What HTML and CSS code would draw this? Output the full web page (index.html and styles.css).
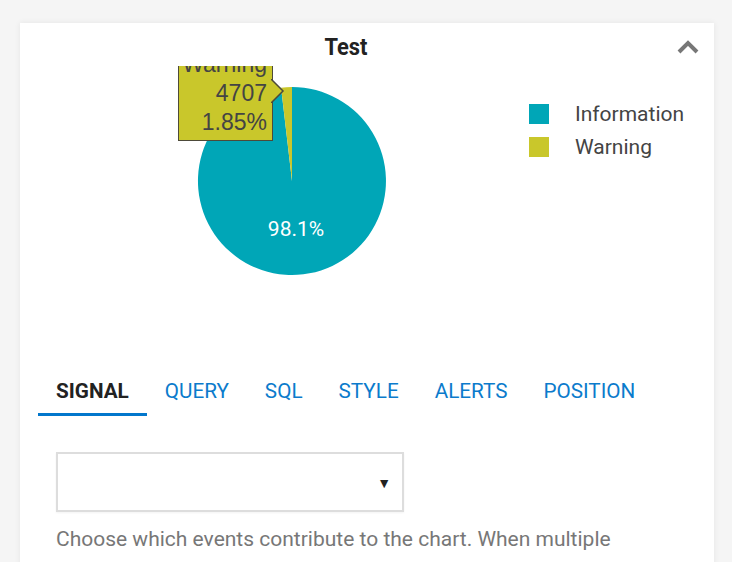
FILE: index.html
```html
<!DOCTYPE html>
<html>
<head>
<meta charset="utf-8">
<link rel="stylesheet" href="styles.css">
</head>
<body>
<div class="card">
  <div class="card-header">
    <h1 class="title">Test</h1>
    <svg class="chevron" width="22" height="14" viewBox="0 0 22 14"><polyline points="2,12 11,3 20,12" fill="none" stroke="#777" stroke-width="4"/></svg>
  </div>
  <div class="chart">
    <svg class="pie" width="500" height="280" viewBox="0 0 500 280">
      <path d="M272,115 L272,21 A94,94 0 1,1 261.1,21.63 Z" fill="#00a6b7"/>
      <path d="M272,115 L261.1,21.63 A94,94 0 0,1 272,21 Z" fill="#c9c72b"/>
      <text x="276" y="170" class="pie-label" text-anchor="middle">98.1%</text>
    </svg>
    <div class="tooltip">
      <div>Warning</div>
      <div>4707</div>
      <div>1.85%</div>
      <svg class="tip-arrow" width="14" height="24" viewBox="0 0 14 24"><polygon points="0,0 12,12 0,24" fill="#c9c72b"/><polyline points="0,0 12,12 0,24" fill="none" stroke="#4d4a3a" stroke-width="1.5"/></svg>
    </div>
    <ul class="legend">
      <li><span class="swatch info"></span>Information</li>
      <li><span class="swatch warn"></span>Warning</li>
    </ul>
  </div>
  <nav class="tabs">
    <a class="tab active">SIGNAL</a>
    <a class="tab">QUERY</a>
    <a class="tab">SQL</a>
    <a class="tab">STYLE</a>
    <a class="tab">ALERTS</a>
    <a class="tab">POSITION</a>
  </nav>
  <div class="panel">
    <div class="select"><span class="caret">&#9660;</span></div>
    <p class="help">Choose which events contribute to the chart. When multiple</p>
  </div>
</div>
</body>
</html>
```
FILE: styles.css
```css
html, body {
  margin: 0;
  padding: 0;
  background: #f5f5f5;
  height: 562px;
  overflow: hidden;
}
body {
  padding: 23px 18px 0 20px;
  font-family: Roboto, "Liberation Sans", sans-serif;
}
.card {
  width: 694px;
  background: #fff;
  box-shadow: 0 0 6px rgba(0, 0, 0, 0.07);
  height: 560px;
}
.card-header {
  height: 43px;
  display: flex;
  align-items: center;
}
.title {
  flex: 1;
  margin: 0;
  text-align: center;
  font-size: 23px;
  font-weight: 700;
  color: #222;
  line-height: 43px;
  padding-top: 6px;
  transform: scaleX(0.95);
}
.chevron {
  flex: none;
  margin: 4px 15px 0 5px;
}
.chart {
  position: relative;
  height: 280px;
  overflow: hidden;
  display: flex;
}
.pie {
  display: block;
  flex: none;
}
.pie-label {
  font-family: Roboto, sans-serif;
  font-size: 21px;
  fill: #fff;
}
.tooltip {
  position: absolute;
  left: 158px;
  top: -20px;
  width: 88px;
  padding: 3px 5px 3px 0;
  background: #c9c72b;
  border: 1.5px solid #4d4a3a;
  font-family: "Liberation Sans", Arial, sans-serif;
  font-size: 23px;
  line-height: 29px;
  color: #444;
  text-align: right;
}
.tip-arrow {
  position: absolute;
  right: -13px;
  top: 32px;
}
.legend {
  list-style: none;
  margin: 31px 0 0 9px;
  padding: 0;
}
.legend li {
  display: flex;
  align-items: center;
  height: 33px;
  font-size: 21px;
  color: #444;
}
.swatch {
  width: 20px;
  height: 20px;
  margin-right: 26px;
}
.swatch.info { background: #00a6b7; }
.swatch.warn { background: #c9c72b; }
.tabs {
  display: flex;
  padding: 18px 0 0 18px;
}
.tab {
  padding: 15px 18px 10px;
  font-size: 20.7px;
  line-height: 24px;
  color: #0b7bcc;
  border-bottom: 3px solid transparent;
}
.tab.active {
  color: #222;
  font-weight: 700;
  border-bottom-color: #0277cc;
}
.panel {
  padding: 36px 0 0 36px;
}
.select {
  box-sizing: border-box;
  width: 348px;
  height: 60px;
  border: 2px solid #ddd;
  box-shadow: 0 1px 2px rgba(0, 0, 0, 0.05);
  display: flex;
  align-items: center;
  justify-content: flex-end;
}
.caret {
  font-size: 14px;
  color: #222;
  margin-right: 11px;
  margin-top: 2px;
}
.help {
  margin: 13px 0 0;
  font-size: 21px;
  line-height: 28px;
  color: #777;
}
```
